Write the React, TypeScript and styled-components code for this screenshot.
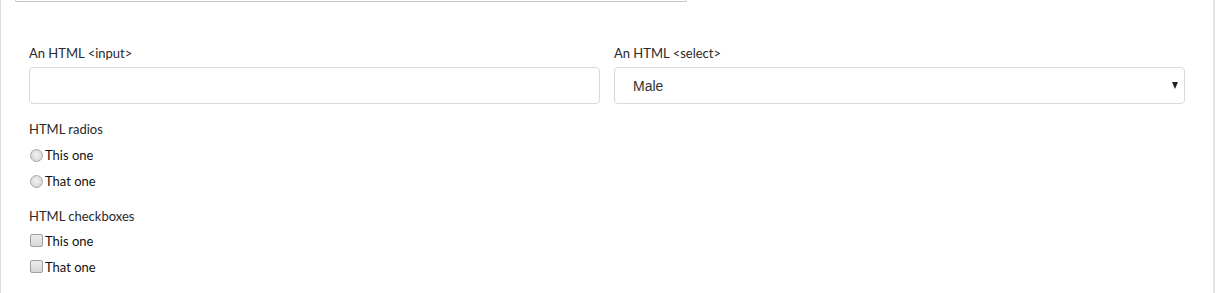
import styled, { createGlobalStyle } from "styled-components";

const GlobalStyle = createGlobalStyle`
  html, body {
    margin: 0;
    padding: 0;
    background: #fff;
  }
  body {
    font-family: Lato, "Open Sans", sans-serif;
    color: #333;
  }
`;

const Panel = styled.div`
  box-sizing: border-box;
  width: 1215px;
  height: 293px;
  border-left: 1px solid #dcdcdc;
  border-right: 2px solid #e4e4e4;
  padding: 0 28px 0 14px;
`;

const PrevField = styled.div`
  box-sizing: border-box;
  width: 672px;
  height: 2px;
  border: 1px solid #c8c8c8;
  border-top: none;
  border-radius: 0 0 4px 4px;
`;

const Form = styled.form`
  margin: 42px 0 0 14px;
`;

const Row = styled.div`
  display: grid;
  grid-template-columns: 571px 571px;
  column-gap: 14px;
  margin-bottom: 16px;
`;

const Field = styled.div`
  display: flex;
  flex-direction: column;
`;

const Label = styled.label`
  display: block;
  font-size: 13px;
  line-height: 18px;
  color: #2a2a2a;
  margin-bottom: 5px;
`;

const GroupLabel = styled(Label)<{ $gap: number }>`
  margin-bottom: ${(p) => p.$gap}px;
`;

const TextInput = styled.input`
  box-sizing: border-box;
  width: 100%;
  height: 37px;
  border: 1px solid #d9d9d9;
  border-radius: 4px;
  padding: 6px 12px;
  font-family: "Liberation Sans", Arial, sans-serif;
  font-size: 14px;
  outline: none;
`;

const SelectWrap = styled.div`
  position: relative;
`;

const Select = styled.select`
  box-sizing: border-box;
  width: 100%;
  height: 37px;
  border: 1px solid #d9d9d9;
  border-radius: 4px;
  padding: 0 0 0 18px;
  background: #fff;
  font-family: "Liberation Sans", Arial, sans-serif;
  font-size: 14px;
  color: #333;
  appearance: none;
  outline: none;
`;

const Caret = styled.span`
  position: absolute;
  right: 7px;
  top: 15px;
  width: 0;
  height: 0;
  border-left: 3px solid transparent;
  border-right: 3px solid transparent;
  border-top: 7px solid #222;
  pointer-events: none;
`;

const Group = styled.div`
  display: flex;
  flex-direction: column;
  margin-bottom: 17px;
`;

const Options = styled.div`
  display: flex;
  flex-direction: column;
  gap: 8px;
`;

const Option = styled.label`
  display: flex;
  align-items: center;
  gap: 2px;
  font-size: 13px;
  line-height: 18px;
  color: #111;
  padding-left: 1px;
`;

const Radio = styled.input`
  appearance: none;
  box-sizing: border-box;
  width: 13px;
  height: 13px;
  margin: 0;
  border: 1px solid #a8a8a8;
  border-radius: 50%;
  background: radial-gradient(circle at 50% 45%, #f2f2f2 0%, #dcdcdc 60%, #cfcfcf 100%);
`;

const Checkbox = styled.input`
  appearance: none;
  box-sizing: border-box;
  width: 13px;
  height: 13px;
  margin: 0 0 2px;
  border: 1px solid #a0a0a0;
  border-radius: 2px;
  background: linear-gradient(#ececec, #d6d6d6);
`;

export default function App() {
  return (
    <>
      <GlobalStyle />
      <Panel>
        <PrevField />
        <Form>
          <Row>
            <Field>
              <Label>An HTML &lt;input&gt;</Label>
              <TextInput type="text" />
            </Field>
            <Field>
              <Label>An HTML &lt;select&gt;</Label>
              <SelectWrap>
                <Select defaultValue="male">
                  <option value="male">Male</option>
                  <option value="female">Female</option>
                </Select>
                <Caret />
              </SelectWrap>
            </Field>
          </Row>
          <Group>
            <GroupLabel $gap={8}>HTML radios</GroupLabel>
            <Options>
              <Option>
                <Radio type="radio" name="r" />
                This one
              </Option>
              <Option>
                <Radio type="radio" name="r" />
                That one
              </Option>
            </Options>
          </Group>
          <Group>
            <GroupLabel $gap={7}>HTML checkboxes</GroupLabel>
            <Options>
              <Option>
                <Checkbox type="checkbox" />
                This one
              </Option>
              <Option>
                <Checkbox type="checkbox" />
                That one
              </Option>
            </Options>
          </Group>
        </Form>
      </Panel>
    </>
  );
}
